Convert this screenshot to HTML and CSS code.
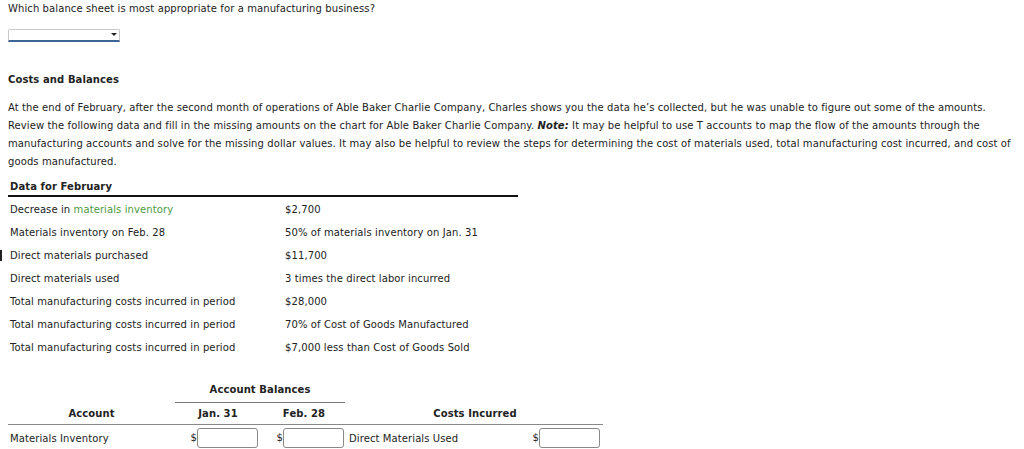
FILE: index.html
```html
<!DOCTYPE html>
<html lang="en">
<head>
    <meta charset="UTF-8">
    <title>Costs and Balances</title>
    <meta name="viewport" content="width=device-width, initial-scale=1.0">
    <link rel="stylesheet" href="styles.css">
</head>
<body>
    <div class="question">
        <p class="prompt">Which balance sheet is most appropriate for a manufacturing business?</p>
        <div class="select-box">
            <span class="select-arrow"></span>
        </div>
    </div>

    <div class="section">
        <h2>Costs and Balances</h2>
        <p class="intro">At the end of February, after the second month of operations of Able Baker Charlie Company, Charles shows you the data he&rsquo;s collected, but he was unable to figure out some of the amounts. Review the following data and fill in the missing amounts on the chart for Able Baker Charlie Company. <b><i>Note:</i></b> It may be helpful to use T accounts to map the flow of the amounts through the manufacturing accounts and solve for the missing dollar values. It may also be helpful to review the steps for determining the cost of materials used, total manufacturing cost incurred, and cost of goods manufactured.</p>

        <table class="data-table">
            <thead>
                <tr><th colspan="2">Data for February</th></tr>
            </thead>
            <tbody>
                <tr><td>Decrease in <span class="term">materials inventory</span></td><td>$2,700</td></tr>
                <tr><td>Materials inventory on Feb. 28</td><td>50% of materials inventory on Jan. 31</td></tr>
                <tr><td><span class="marker"></span>Direct materials purchased</td><td>$11,700</td></tr>
                <tr><td>Direct materials used</td><td>3 times the direct labor incurred</td></tr>
                <tr><td>Total manufacturing costs incurred in period</td><td>$28,000</td></tr>
                <tr><td>Total manufacturing costs incurred in period</td><td>70% of Cost of Goods Manufactured</td></tr>
                <tr><td>Total manufacturing costs incurred in period</td><td>$7,000 less than Cost of Goods Sold</td></tr>
            </tbody>
        </table>

        <table class="balance-table">
            <colgroup>
                <col class="col-account">
                <col class="col-jan">
                <col class="col-feb">
                <col class="col-name">
                <col class="col-cost">
            </colgroup>
            <thead>
                <tr class="group-row">
                    <th></th>
                    <th colspan="2"><span class="group-label">Account Balances</span></th>
                    <th colspan="2"></th>
                </tr>
                <tr class="head-row">
                    <th>Account</th>
                    <th>Jan. 31</th>
                    <th>Feb. 28</th>
                    <th colspan="2">Costs Incurred</th>
                </tr>
            </thead>
            <tbody>
                <tr>
                    <td>Materials Inventory</td>
                    <td class="money"><span>$</span><input type="text"></td>
                    <td class="money"><span>$</span><input type="text"></td>
                    <td>Direct Materials Used</td>
                    <td class="money"><span>$</span><input type="text"></td>
                </tr>
            </tbody>
        </table>
    </div>
</body>
</html>
```

FILE: styles.css
```css
/* base */
body {
    margin: 0;
    padding: 0 8px;
    font-family: Verdana, 'DejaVu Sans', sans-serif;
    font-size: 10px;
    letter-spacing: 0.1px;
    color: #222;
    background: #fff;
}
p {
    margin: 0;
}

/* question + dropdown */
.prompt {
    padding-top: 2px;
    line-height: 13px;
}
.select-box {
    position: relative;
    width: 110px;
    height: 10px;
    margin-top: 14px;
    border: 1px solid #c8c8c8;
    border-bottom: 2px solid #3c6596;
    border-radius: 2px 2px 0 0;
    background: #fff;
}
.select-arrow {
    position: absolute;
    right: 2px;
    top: 3px;
    border-left: 3px solid transparent;
    border-right: 3px solid transparent;
    border-top: 3px solid #222;
}

/* costs section */
.section h2 {
    margin: 31px 0 0 0;
    font-size: 10px;
    font-weight: bold;
    line-height: 13px;
}
.intro {
    margin-top: 13px;
    line-height: 18px;
}
.term {
    color: #4f9a3e;
}

/* data table */
.data-table {
    border-collapse: collapse;
    width: 510px;
    margin-top: 6px;
}
.data-table th {
    text-align: left;
    font-weight: bold;
    padding: 3px 2px 2px 2px;
    line-height: 13px;
    border-bottom: 2px solid #111;
}
.data-table td {
    padding: 5px 2px 5px 2px;
    line-height: 13px;
}
.data-table tbody tr:first-child td {
    padding-top: 6px;
}
.data-table td:first-child {
    width: 271px;
}
.marker {
    position: absolute;
    left: 0;
    width: 2px;
    height: 11px;
    margin-top: 1px;
    background: #222;
}

/* balance table */
.balance-table {
    border-collapse: collapse;
    table-layout: fixed;
    width: 595px;
    margin-top: 24px;
}
.col-account {
    width: 167px;
}
.col-jan,
.col-feb {
    width: 86px;
}
.col-name {
    width: 180px;
}
.col-cost {
    width: 76px;
}
.balance-table th {
    font-weight: bold;
    line-height: 13px;
    padding: 0;
}
.group-row th {
    padding-bottom: 4px;
}
.group-label {
    display: block;
    margin-right: 2px;
    padding-bottom: 6px;
    border-bottom: 1px solid #777;
}
.head-row th {
    padding: 0 0 4px 0;
    border-bottom: 1px solid #888;
}
.balance-table td {
    padding: 3px 0 0 2px;
    line-height: 13px;
    white-space: nowrap;
}
.balance-table td.money {
    text-align: right;
    padding-right: 3px;
}
.money input {
    box-sizing: border-box;
    width: 61px;
    height: 20px;
    padding: 0;
    margin: 0;
    border: 1px solid #888;
    border-radius: 3px;
    vertical-align: middle;
    font-family: inherit;
    font-size: 10px;
}
```
